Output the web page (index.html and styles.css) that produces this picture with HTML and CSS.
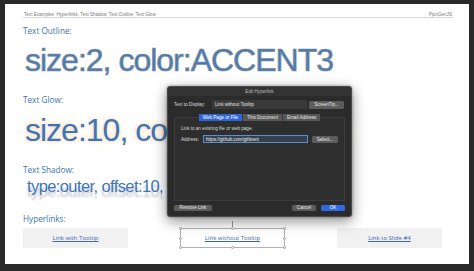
FILE: index.html
```html
<!DOCTYPE html>
<html>
<head>
<meta charset="utf-8">
<link rel="stylesheet" href="styles.css">
</head>
<body>
<div class="slide">
  <div class="header">
    <span>Text Examples: Hyperlinks, Text Shadow, Text Outline, Text Glow</span>
    <span>PptxGenJS</span>
  </div>
  <div class="label l-outline">Text Outline:</div>
  <div class="big outline">size:2, color:ACCENT3</div>
  <div class="label l-glow">Text Glow:</div>
  <div class="big glow">size:10, color:ACCENT3</div>
  <div class="label l-shadow">Text Shadow:</div>
  <div class="shadowtext">type:outer, offset:10, blur:8, color:000000</div>
  <div class="label l-links">Hyperlinks:</div>
  <div class="links">
    <div class="linkbox"><a>Link with Tooltip</a></div>
    <div class="linkbox plain"><a>Link without Tooltip</a>
      <span class="sel"></span>
      <span class="h h1"></span><span class="h h2"></span><span class="h h3"></span><span class="h h4"></span>
      <span class="h h5"></span><span class="h h6"></span><span class="h h7"></span><span class="h h8"></span>
      <span class="rot"></span>
    </div>
    <div class="linkbox"><a>Link to Slide #4</a></div>
  </div>
</div>

<div class="dialog">
  <div class="title">Edit Hyperlink</div>
  <div class="row1">
    <span class="lbl">Text to Display:</span>
    <span class="field">Link without Tooltip</span>
    <span class="btn">ScreenTip...</span>
  </div>
  <div class="group">
    <div class="tabs">
      <span class="tab active">Web Page or File</span>
      <span class="tab">This Document</span>
      <span class="tab">Email Address</span>
    </div>
    <div class="hint">Link to an existing file or web page.</div>
    <div class="addr">
      <span class="lbl">Address:</span>
      <span class="field focus">https://github.com/gitbrent</span>
      <span class="btn sel-btn">Select...</span>
    </div>
  </div>
  <div class="footer">
    <span class="btn">Remove Link</span>
    <span class="spacer"></span>
    <span class="btn">Cancel</span>
    <span class="btn ok">OK</span>
  </div>
</div>
</body>
</html>
```
FILE: styles.css
```css
html, body {
  margin: 0;
  padding: 0;
}
body {
  background: #2a2a2a;
  width: 474px;
  height: 271px;
  overflow: hidden;
  padding: 4px 5px 0 5px;
  box-sizing: border-box;
  position: relative;
  font-family: "Liberation Sans", Arial, sans-serif;
}
.slide {
  width: 464px;
  height: 260px;
  background: #ffffff;
  box-sizing: border-box;
  padding: 0 15px 0 18px;
  display: flex;
  flex-direction: column;
  overflow: hidden;
}
.header {
  display: flex;
  justify-content: space-between;
  font-size: 4.6px;
  color: #7a7a7a;
  height: 14px;
  box-sizing: border-box;
  padding: 8px 2px 0 1px;
  border-bottom: 1px solid #d6d6d6;
  line-height: 5px;
}
.label {
  font-family: "Open Sans", "Liberation Sans", sans-serif;
  font-size: 8.2px;
  line-height: 10px;
  color: #3a73ae;
}
.l-outline { margin-top: 8px; }
.l-glow { margin-top: 15px; }
.l-shadow { margin-top: 15px; }
.l-links { margin-top: 17px; }
.big {
  font-family: "Liberation Sans", Arial, sans-serif;
  font-size: 32px;
  letter-spacing: -1px;
  line-height: 40px;
  white-space: nowrap;
  padding-left: 2px;
  margin-top: 4px;
}
.outline {
  color: #4a7bb3;
  -webkit-text-stroke: 0.7px #7f8c99;
}
.glow {
  margin-top: 5px;
  color: #3d76b8;
  text-shadow: 0 0 2px #fbe0c4, 0 0 4px #fbdcbc, 0 0 8px #fde9d6;
}
.shadowtext {
  font-family: "Liberation Sans", Arial, sans-serif;
  font-size: 16.5px;
  letter-spacing: -0.6px;
  line-height: 22px;
  white-space: nowrap;
  color: #3d76b8;
  padding-left: 4px;
  text-shadow: 0 5px 2px rgba(110,110,130,0.4);
}
.links {
  display: flex;
  gap: 52px;
  margin-top: 4px;
}
.linkbox {
  width: 105px;
  height: 20px;
  background: #f1f1f1;
  display: flex;
  align-items: center;
  justify-content: center;
  position: relative;
}
.linkbox.plain { background: #ffffff; }
.linkbox a {
  font-family: "Open Sans", "Liberation Sans", sans-serif;
  font-size: 6px;
  color: #3a66b0;
  text-decoration: underline;
}
.sel {
  position: absolute;
  left: 0; top: 0; right: 0; bottom: 0;
  border: 1px solid #b0b0b0;
}
.h {
  position: absolute;
  width: 3px; height: 3px;
  border: 1px solid #9a9a9a;
  background: #fff;
  border-radius: 50%;
  box-sizing: border-box;
}
.h1 { left: -1px; top: -1px; }
.h2 { left: 51px; top: -1px; }
.h3 { right: -1px; top: -1px; }
.h4 { left: -1px; top: 9px; }
.h5 { right: -1px; top: 9px; }
.h6 { left: -1px; bottom: -1px; }
.h7 { left: 51px; bottom: -1px; }
.h8 { right: -1px; bottom: -1px; }
.rot {
  position: absolute;
  left: 52px;
  top: -7px;
  width: 1px;
  height: 6px;
  background: #9a9a9a;
}

.dialog {
  position: absolute;
  left: 167px;
  top: 86px;
  width: 185px;
  height: 131px;
  background: #2b2b2b;
  border: 1px solid #4a4a4a;
  border-radius: 3px;
  box-sizing: border-box;
  box-shadow: 0 4px 14px rgba(0,0,0,0.45), 0 0 3px rgba(0,0,0,0.4);
  display: flex;
  flex-direction: column;
  font-family: "Liberation Sans", Arial, sans-serif;
  font-size: 4.6px;
  color: #dcdcdc;
  padding: 0 6px 5px 6px;
}
.title {
  text-align: center;
  height: 9px;
  line-height: 9px;
  color: #bdbdbd;
  margin: 0 -6px;
  background: #333333;
  border-radius: 3px 3px 0 0;
}
.row1 {
  display: flex;
  align-items: center;
  margin-top: 4px;
  height: 9px;
}
.row1 .lbl { width: 38px; }
.field {
  background: #3a3a3a;
  height: 9px;
  line-height: 9px;
  padding: 0 3px;
  box-sizing: border-box;
  width: 95px;
  color: #e4e4e4;
}
.btn {
  background: #5c5c5c;
  color: #eaeaea;
  height: 7px;
  line-height: 7px;
  padding: 0 3px;
  border-radius: 1.5px;
  text-align: center;
  box-sizing: border-box;
}
.row1 .btn { width: 35px; margin-left: 2px; height: 8px; line-height: 8px; }
.group {
  margin-top: 8px;
  border: 1px solid #3c3c3c;
  background: #2e2e2e;
  height: 84px;
  position: relative;
  box-sizing: border-box;
  padding: 0 6px;
  display: flex;
  flex-direction: column;
}
.tabs {
  display: flex;
  justify-content: center;
  margin-top: -4px;
}
.tab {
  background: #575757;
  height: 7px;
  line-height: 7px;
  padding: 0 4px;
  color: #e6e6e6;
  border-right: 1px solid #3a3a3a;
}
.tab:last-child { border-right: 0; }
.tab.active {
  background: #2f66d6;
  color: #ffffff;
}
.hint {
  margin-top: 4px;
  height: 7px;
  line-height: 7px;
}
.addr {
  display: flex;
  align-items: center;
  margin-top: 3px;
}
.addr .lbl { width: 22px; }
.field.focus {
  width: 105px;
  height: 8px;
  line-height: 7px;
  background: #35404f;
  border: 1px solid #5d8ccf;
  color: #f0f0f0;
  padding: 0 2px;
}
.sel-btn { width: 26px; margin-left: 4px; }
.footer {
  display: flex;
  align-items: center;
  margin-top: auto;
  gap: 5px;
}
.footer .btn { height: 6px; line-height: 6px; }
.footer .btn:first-child { width: 38px; }
.spacer { flex: 1; }
.footer .btn:nth-child(3) { width: 24px; }
.btn.ok { width: 24px; background: #2f6ae0; color: #fff; }
```
